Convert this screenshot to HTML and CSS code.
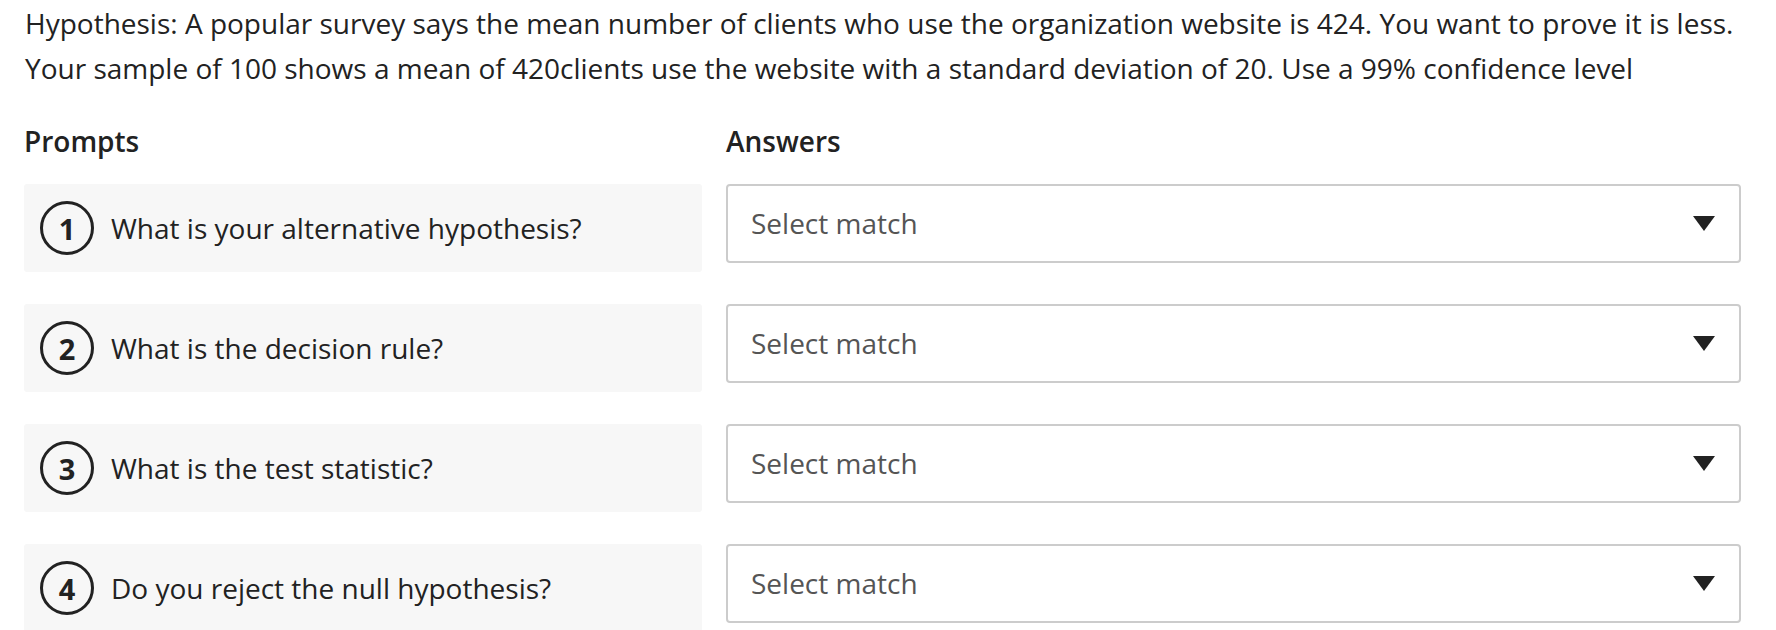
FILE: index.html
```html
<!DOCTYPE html>
<html lang="en">
  <head>
    <meta charset="UTF-8" />
    <title>Matching question</title>
    <link rel="stylesheet" href="styles.css">
  </head>
  <body>
    <p class="question">
      Hypothesis: A popular survey says the mean number of clients who use the organization website is 424. You want to prove it is less. Your sample of 100 shows a mean of 420clients use the website with a standard deviation of 20. Use a 99% confidence level
    </p>

    <div class="match">
      <div class="col-title">Prompts</div>
      <div class="col-title">Answers</div>

      <div class="prompt">
        <span class="num">1</span>
        <span>What is your alternative hypothesis?</span>
      </div>
      <div class="select">
        <span>Select match</span>
        <span class="arrow"></span>
      </div>

      <div class="prompt">
        <span class="num">2</span>
        <span>What is the decision rule?</span>
      </div>
      <div class="select">
        <span>Select match</span>
        <span class="arrow"></span>
      </div>

      <div class="prompt">
        <span class="num">3</span>
        <span>What is the test statistic?</span>
      </div>
      <div class="select">
        <span>Select match</span>
        <span class="arrow"></span>
      </div>

      <div class="prompt">
        <span class="num">4</span>
        <span>Do you reject the null hypothesis?</span>
      </div>
      <div class="select">
        <span>Select match</span>
        <span class="arrow"></span>
      </div>
    </div>
  </body>
</html>
```

FILE: styles.css
```css
body {
  margin: 0;
  padding: 1px 35px 0 24px;
  font-family: "Open Sans", Arial, sans-serif;
  font-size: 28px;
  line-height: 45px;
  color: #222222;
  background-color: #ffffff;
}
.question {
  margin: 0 0 28px 1px;
}
/* Two column matching grid */
.match {
  display: grid;
  grid-template-columns: 678px 1fr;
  column-gap: 24px;
  row-gap: 32px;
}
.col-title {
  font-weight: 600;
  margin-bottom: -12px;
}
.prompt {
  display: flex;
  align-items: center;
  gap: 17px;
  height: 88px;
  padding-left: 16px;
  background-color: #f7f7f7;
  border-radius: 3px;
  box-sizing: border-box;
}
.num {
  display: flex;
  align-items: center;
  justify-content: center;
  width: 54px;
  height: 54px;
  border: 3px solid #222222;
  border-radius: 50%;
  box-sizing: border-box;
  font-size: 29px;
  font-weight: 700;
  flex-shrink: 0;
}
.select {
  align-self: start;
  display: flex;
  align-items: center;
  justify-content: space-between;
  height: 79px;
  padding: 0 24px 0 23px;
  border: 2px solid #cccccc;
  border-radius: 4px;
  box-sizing: border-box;
  color: #555555;
}
.arrow {
  width: 0;
  height: 0;
  border-left: 11px solid transparent;
  border-right: 11px solid transparent;
  border-top: 15px solid #222222;
}
```
